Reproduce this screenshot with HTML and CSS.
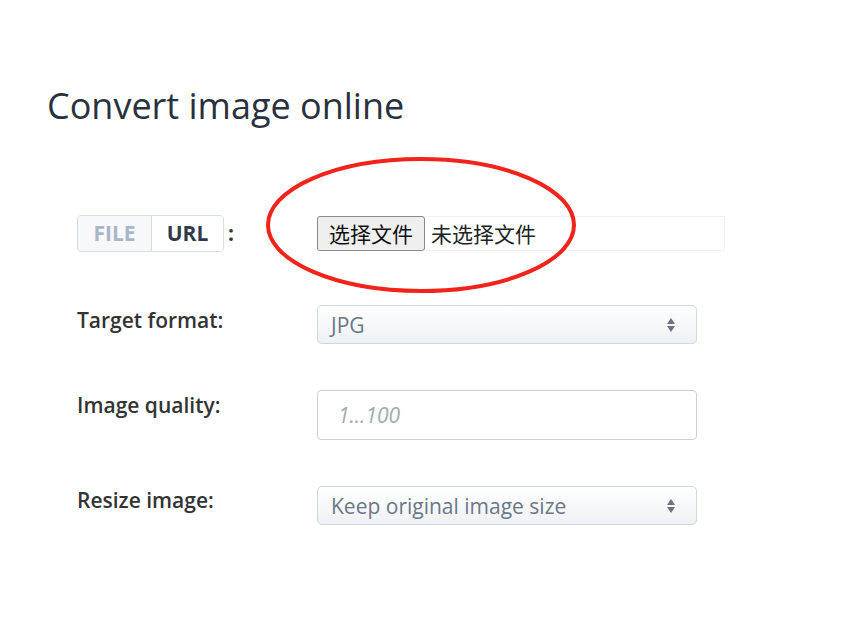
FILE: index.html
```html
<!DOCTYPE html>
<html>
<head>
<meta charset="utf-8">
<link rel="stylesheet" href="styles.css">
</head>
<body>
<div class="page">
  <h1 class="title">Convert image online</h1>
  <form class="form">
    <div class="row row-file">
      <div class="label-cell">
        <div class="toggle">
          <span class="tab tab-file">FILE</span>
          <span class="tab tab-url">URL</span>
        </div>
        <span class="colon">:</span>
      </div>
      <div class="field-cell">
        <div class="file-box">
          <span class="file-btn">选择文件</span>
          <span class="file-none">未选择文件</span>
        </div>
        <svg class="circle" width="316" height="140" viewBox="0 0 316 140">
          <ellipse cx="156" cy="69" rx="153" ry="66" fill="none" stroke="#f2231a" stroke-width="4"/>
        </svg>
      </div>
    </div>
    <div class="row row-target">
      <label class="label">Target format:</label>
      <div class="field-cell">
        <div class="select">
          <span class="select-text">JPG</span>
          <svg class="arrows" width="10" height="18" viewBox="0 0 10 18"><path d="M5 2 L9 8 H1 Z M1 10 H9 L5 16 Z" fill="#6b7480"/></svg>
        </div>
      </div>
    </div>
    <div class="row row-quality">
      <label class="label">Image quality:</label>
      <div class="field-cell">
        <div class="input"><span class="placeholder">1...100</span></div>
      </div>
    </div>
    <div class="row row-resize">
      <label class="label">Resize image:</label>
      <div class="field-cell">
        <div class="select">
          <span class="select-text">Keep original image size</span>
          <svg class="arrows" width="10" height="18" viewBox="0 0 10 18"><path d="M5 2 L9 8 H1 Z M1 10 H9 L5 16 Z" fill="#6b7480"/></svg>
        </div>
      </div>
    </div>
  </form>
</div>
</body>
</html>
```
FILE: styles.css
```css
html, body {
  margin: 0;
  padding: 0;
  background: #ffffff;
}
body {
  font-family: "Open Sans", "Noto Sans", sans-serif;
  color: #333333;
}
.page {
  padding: 80px 0 0 47px;
}
.title {
  margin: 0;
  font-size: 36px;
  font-weight: 400;
  line-height: 52px;
  color: #28313d;
}
.form {
  margin-top: 82px;
  padding-left: 30px;
}
.row {
  display: flex;
  align-items: flex-start;
}
.label-cell {
  width: 240px;
  display: flex;
  align-items: center;
}
.label {
  width: 240px;
  font-size: 21px;
  font-weight: 600;
  color: #333333;
  line-height: 26px;
}
.field-cell {
  position: relative;
}
.toggle {
  display: flex;
  border: 1px solid #d5dde7;
  border-radius: 4px;
  overflow: hidden;
  height: 35px;
}
.tab {
  display: flex;
  align-items: center;
  justify-content: center;
  font-size: 21px;
  font-weight: 700;
}
.tab-file {
  width: 73px;
  background: #f6f8fa;
  color: #a9b6c7;
  border-right: 1px solid #d5dde7;
}
.tab-url {
  width: 71px;
  background: #ffffff;
  color: #2f3a48;
}
.colon {
  margin-left: 4px;
  font-size: 21px;
  font-weight: 700;
  color: #333333;
}
.row-file {
  align-items: center;
  height: 38px;
}
.file-box {
  width: 408px;
  height: 35px;
  border: 1px solid #f3f3f3;
  display: flex;
  align-items: center;
  box-sizing: border-box;
}
.file-btn {
  font-family: "Noto Sans CJK SC", sans-serif;
  font-size: 21px;
  line-height: 25px;
  padding: 4px 11px 4px;
  margin-left: -1px;
  border: 1px solid #8a8a8a;
  border-radius: 3px;
  background: #efefef;
  color: #111111;
}
.file-none {
  font-family: "Noto Sans CJK SC", sans-serif;
  font-size: 21px;
  margin-left: 6px;
  color: #222222;
}
.circle {
  position: absolute;
  left: -52px;
  top: -60px;
}
.row-target {
  margin-top: 53px;
}
.row-target .label {
  padding-top: 2px;
}
.select {
  width: 380px;
  height: 39px;
  box-sizing: border-box;
  border: 1px solid #cfd8e2;
  border-radius: 5px;
  background: linear-gradient(#ffffff, #eef1f4);
  display: flex;
  align-items: center;
  justify-content: space-between;
  padding: 0 20px 0 13px;
}
.select-text {
  font-size: 21px;
  color: #6b7785;
}
.row-quality {
  margin-top: 46px;
}
.row-quality .label {
  padding-top: 2px;
}
.input {
  width: 380px;
  height: 50px;
  box-sizing: border-box;
  border: 1px solid #ccd0d4;
  border-radius: 4px;
  display: flex;
  align-items: center;
  padding-left: 20px;
}
.placeholder {
  font-size: 21px;
  font-style: italic;
  color: #a3aab2;
}
.row-resize {
  margin-top: 46px;
}
.row-resize .label {
  padding-top: 1px;
}
```
